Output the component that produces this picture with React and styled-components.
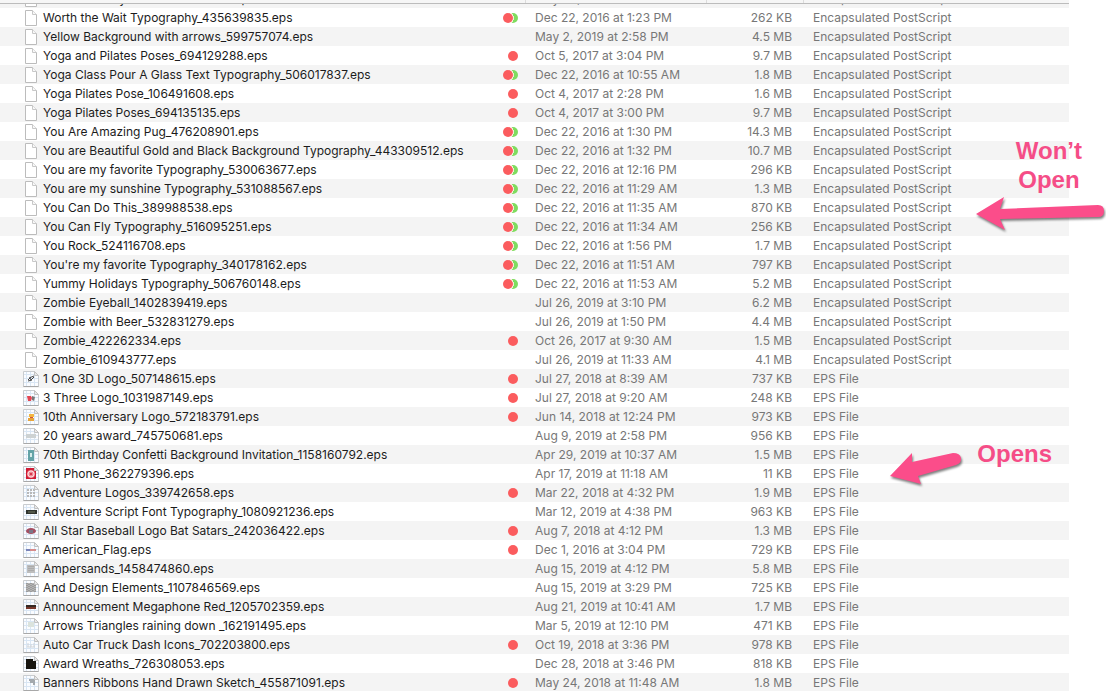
import React from 'react'
import styled, { createGlobalStyle } from 'styled-components'

const GlobalStyle = createGlobalStyle`
  body {
    margin: 0;
    background: #fff;
    overflow: hidden;
    font-family: Inter, "Liberation Sans", sans-serif;
  }
`;

const Page = styled.main`
  position: relative;
  height: 100vh;
  overflow: hidden;
`;

const FileTable = styled.table`
  width: calc(100% - 37px);
  table-layout: fixed;
  border-collapse: collapse;
  font-size: 12px;
  line-height: 19px;
  color: #777;
`;

const NameCol = styled.col``;

const TagCol = styled.col`
  width: 36px;
`;

const DateCol = styled.col`
  width: 181px;
`;

const SizeCol = styled.col`
  width: 97px;
`;

const KindCol = styled.col`
  width: 266px;
`;

const HeadCell = styled.th`
  height: 3px;
  padding: 0;
  background: #f6f6f6;
  border-bottom: 1px solid #bcbcbc;
  border-right: ${props => props.$line ? '1px solid #dcdcdc' : 'none'};
`;

const Row = styled.tr`
  height: 19px;
  background: #fff;

  &:nth-child(odd) {
    background: #f4f4f4;
  }
`;

const CutRow = styled(Row)`
  height: 4px;
`;

const Cell = styled.td`
  padding: 0 ${props => props.$right || 0}px 0 ${props => props.$left || 0}px;
  text-align: ${props => props.$align || 'left'};
  white-space: nowrap;
`;

const CutText = styled.div`
  display: flex;
  align-items: flex-end;
  height: 4px;
  overflow: hidden;
`;

const FileName = styled.div`
  display: flex;
  align-items: center;
  gap: 4px;
  height: 19px;
  color: #1c1c1c;

  & svg {
    flex: none;
  }
`;

const Tags = styled.div`
  display: flex;
  align-items: center;
  justify-content: flex-end;
  height: 19px;
`;

const Dot = styled.span`
  width: 10px;
  height: 10px;
  border-radius: 50%;
  background: #fb5c5e;
`;

const Moon = styled.span`
  width: 10px;
  height: 10px;
  margin-left: -5px;
  border-radius: 50%;
  background: radial-gradient(circle at 0 5px, transparent 5px, #f3ecd4 5px, #f3ecd4 6px, #7fdc5f 6px);
`;

const Note = styled.div`
  position: absolute;
  top: ${props => props.$top}px;
  right: ${props => props.$right}px;
  color: #f54d87;
  font-family: "Liberation Sans", Arial, sans-serif;
  font-size: 24px;
  font-weight: bold;
  line-height: 29px;
  text-align: center;
`;

const Arrow = styled.svg`
  position: absolute;
  top: ${props => props.$top}px;
  right: ${props => props.$right}px;
  overflow: visible;
  filter: drop-shadow(1px 2px 1px rgba(0, 0, 0, 0.5));
`;

const PS = 'Encapsulated PostScript';
const EPS = 'EPS File';

// name, tags, date, size, kind, preview
const files = [
  ['Worth the Wait Typography_435639835.eps', 2, 'Dec 22, 2016 at 1:23 PM', '262 KB', PS],
  ['Yellow Background with arrows_599757074.eps', 0, 'May 2, 2019 at 2:58 PM', '4.5 MB', PS],
  ['Yoga and Pilates Poses_694129288.eps', 1, 'Oct 5, 2017 at 3:04 PM', '9.7 MB', PS],
  ['Yoga Class Pour A Glass Text Typography_506017837.eps', 2, 'Dec 22, 2016 at 10:55 AM', '1.8 MB', PS],
  ['Yoga Pilates Pose_106491608.eps', 1, 'Oct 4, 2017 at 2:28 PM', '1.6 MB', PS],
  ['Yoga Pilates Poses_694135135.eps', 1, 'Oct 4, 2017 at 3:00 PM', '9.7 MB', PS],
  ['You Are Amazing Pug_476208901.eps', 2, 'Dec 22, 2016 at 1:30 PM', '14.3 MB', PS],
  ['You are Beautiful Gold and Black Background Typography_443309512.eps', 2, 'Dec 22, 2016 at 1:32 PM', '10.7 MB', PS],
  ['You are my favorite Typography_530063677.eps', 2, 'Dec 22, 2016 at 12:16 PM', '296 KB', PS],
  ['You are my sunshine Typography_531088567.eps', 2, 'Dec 22, 2016 at 11:29 AM', '1.3 MB', PS],
  ['You Can Do This_389988538.eps', 2, 'Dec 22, 2016 at 11:35 AM', '870 KB', PS],
  ['You Can Fly Typography_516095251.eps', 2, 'Dec 22, 2016 at 11:34 AM', '256 KB', PS],
  ['You Rock_524116708.eps', 2, 'Dec 22, 2016 at 1:56 PM', '1.7 MB', PS],
  ["You're my favorite Typography_340178162.eps", 2, 'Dec 22, 2016 at 11:51 AM', '797 KB', PS],
  ['Yummy Holidays Typography_506760148.eps', 2, 'Dec 22, 2016 at 11:53 AM', '5.2 MB', PS],
  ['Zombie Eyeball_1402839419.eps', 0, 'Jul 26, 2019 at 3:10 PM', '6.2 MB', PS],
  ['Zombie with Beer_532831279.eps', 0, 'Jul 26, 2019 at 1:50 PM', '4.4 MB', PS],
  ['Zombie_422262334.eps', 1, 'Oct 26, 2017 at 9:30 AM', '1.5 MB', PS],
  ['Zombie_610943777.eps', 0, 'Jul 26, 2019 at 11:33 AM', '4.1 MB', PS],
  ['1 One 3D Logo_507148615.eps', 1, 'Jul 27, 2018 at 8:39 AM', '737 KB', EPS, 'scribble'],
  ['3 Three Logo_1031987149.eps', 1, 'Jul 27, 2018 at 9:20 AM', '248 KB', EPS, 'three'],
  ['10th Anniversary Logo_572183791.eps', 1, 'Jun 14, 2018 at 12:24 PM', '973 KB', EPS, 'gold'],
  ['20 years award_745750681.eps', 0, 'Aug 9, 2019 at 2:58 PM', '956 KB', EPS, 'band'],
  ['70th Birthday Confetti Background Invitation_1158160792.eps', 0, 'Apr 29, 2019 at 10:37 AM', '1.5 MB', EPS, 'card'],
  ['911 Phone_362279396.eps', 0, 'Apr 17, 2019 at 11:18 AM', '11 KB', EPS, 'phone'],
  ['Adventure Logos_339742658.eps', 1, 'Mar 22, 2018 at 4:32 PM', '1.9 MB', EPS, 'grid'],
  ['Adventure Script Font Typography_1080921236.eps', 0, 'Mar 12, 2019 at 4:38 PM', '963 KB', EPS, 'dark'],
  ['All Star Baseball Logo Bat Satars_242036422.eps', 1, 'Aug 7, 2018 at 4:12 PM', '1.3 MB', EPS, 'ball'],
  ['American_Flag.eps', 1, 'Dec 1, 2016 at 3:04 PM', '729 KB', EPS, 'flag'],
  ['Ampersands_1458474860.eps', 0, 'Aug 15, 2019 at 4:12 PM', '5.8 MB', EPS, 'block'],
  ['And Design Elements_1107846569.eps', 0, 'Aug 15, 2019 at 3:29 PM', '725 KB', EPS, 'dense'],
  ['Announcement Megaphone Red_1205702359.eps', 0, 'Aug 21, 2019 at 10:41 AM', '1.7 MB', EPS, 'mega'],
  ['Arrows Triangles raining down _162191495.eps', 0, 'Mar 5, 2019 at 12:10 PM', '471 KB', EPS, 'faint'],
  ['Auto Car Truck Dash Icons_702203800.eps', 1, 'Oct 19, 2018 at 3:36 PM', '978 KB', EPS, 'dash'],
  ['Award Wreaths_726308053.eps', 0, 'Dec 28, 2018 at 3:46 PM', '818 KB', EPS, 'black'],
  ['Banners Ribbons Hand Drawn Sketch_455871091.eps', 1, 'May 24, 2018 at 11:48 AM', '1.8 MB', EPS, 'sketch'],
];

const previews = {
  scribble: <path d="M5 9l2-2 1 2 3-3M6 7l5-2M5 10l4-1" stroke="#444" fill="none" />,
  three: <><path d="M4 6h4l1 2-1 3H5z" fill="#e44653" /><path d="M9 6l3 1-1 4-2-1z" fill="#777" /></>,
  gold: <><path d="M6 5h5v3H6z" fill="#f3b63f" /><path d="M5 9h6v3H5z" fill="#e8a43a" /><path d="M7 8h3v1H7z" fill="#d1503b" /></>,
  band: <path d="M3 6h10v4H3z" fill="#cdd2d3" />,
  card: <><path d="M5 3h6v11H5z" fill="#63a3a7" /><path d="M7 6h2v4H7z" fill="#d6ecea" /></>,
  phone: <><path d="M3 2h8l2 2v9H3z" fill="#d01d35" /><circle cx="8" cy="8" r="4" fill="#ef8793" /><circle cx="8" cy="8" r="3" fill="none" stroke="#fbdde0" /><circle cx="8" cy="8" r="1" fill="#d01d35" /></>,
  grid: <path d="M4 5h2M7 5h2M10 5h2M4 8h2M7 8h2M10 8h2M4 11h2M7 11h2M10 11h2" stroke="#b8b8b8" strokeWidth="2" />,
  dark: <><path d="M3 6h11v4H3z" fill="#30342f" /><path d="M5 8h7" stroke="#747b65" /></>,
  ball: <><ellipse cx="8" cy="8" rx="5" ry="3" fill="#a34f62" /><path d="M6 7h4v3H6z" fill="#79788a" /></>,
  flag: <><path d="M3 8h4" stroke="#7983b8" strokeWidth="2" /><path d="M7 8h6" stroke="#d68b8b" strokeWidth="2" /></>,
  block: <><path d="M4 4h8v8H4z" fill="#bdbdbd" /><path d="M6 5v6M8 5v6M10 5v6" stroke="#989898" strokeDasharray="1 1" /></>,
  dense: <><path d="M3 3h8l2 2v7H3z" fill="#b4b4b4" /><path d="M4 3v9M6 4v8M8 3v9M10 4v8M12 5v7" stroke="#838383" strokeDasharray="1 1" /></>,
  mega: <><path d="M3 6h10v4H3z" fill="#352924" /><path d="M3 9h10" stroke="#b64432" /></>,
  faint: <path d="M5 4h6v5H5z" fill="#dbe3dd" />,
  dash: <path d="M4 10h8M5 6v4M8 7v3M11 6v4" stroke="#d0d4d8" fill="none" />,
  black: <path d="M3 3h7v2h3v8H3z" fill="#17150f" />,
  sketch: <path d="M6 5h6M7 7h5M10 9h2" stroke="#a3a9ae" strokeWidth="2" />,
};

const BlankIcon = () => (
  <svg width="16" height="16" viewBox="0 0 16 16">
    <path d="M2.5 .5h7l4 4v11h-11z" fill="#fff" stroke="#bcbcbc" />
    <path d="M9.5 .5v4h4" fill="#f8f8f8" stroke="#c8c8c8" />
  </svg>
);

const PreviewIcon = ({ type }) => (
  <svg width="16" height="16" viewBox="0 0 16 16">
    <path d="M.5 .5h11l4 4v11H.5z" fill="#fafcff" stroke="#c9cccf" />
    <path d="M3.500 1v14M7.500 1v14M11.500 4v11M1 3.500h11M1 7.500h14M1 11.500h14" stroke="#d9e6f4" />
    {previews[type]}
    <path d="M11.500 .5v4h4z" fill="#e9e9e9" stroke="#c2c2c2" />
    <path d="M.5 15.500h15" stroke="#a8a8a8" />
  </svg>
);

const App = () => {
  return (
    <Page>
      <GlobalStyle />
      <FileTable>
        <colgroup>
          <NameCol />
          <TagCol />
          <DateCol />
          <SizeCol />
          <KindCol />
        </colgroup>
        <thead>
          <tr>
            <HeadCell />
            <HeadCell $line />
            <HeadCell $line />
            <HeadCell $line />
            <HeadCell />
          </tr>
        </thead>
        <tbody>
          {/* row scrolled under the header, only its bottom edge shows */}
          <CutRow>
            <Cell $left={23}>
              <CutText>
                <FileName><BlankIcon />Winter Holiday Scene_128830412.eps</FileName>
              </CutText>
            </Cell>
            <Cell />
            <Cell $left={10}><CutText>May 24, 2018 at 3:12 PM</CutText></Cell>
            <Cell />
            <Cell $left={10}><CutText>{PS}</CutText></Cell>
          </CutRow>
          {files.map(([name, tags, date, size, kind, preview]) => (
            <Row key={name}>
              <Cell $left={23}>
                <FileName>
                  {preview ? <PreviewIcon type={preview} /> : <BlankIcon />}
                  {name}
                </FileName>
              </Cell>
              <Cell $right={7}>
                <Tags>
                  {tags > 0 && <Dot />}
                  {tags > 1 && <Moon />}
                </Tags>
              </Cell>
              <Cell $left={10}>{date}</Cell>
              <Cell $right={11} $align="right">{size}</Cell>
              <Cell $left={10}>{kind}</Cell>
            </Row>
          ))}
        </tbody>
      </FileTable>
      <Note $top={136} $right={24}>Won’t<br />Open</Note>
      <Arrow $top={195} $right={1} width="130" height="40" viewBox="0 0 130 40">
        <path d="M1 19L29 2l-4 12 98-4q6 0 6 6t-6 6l-98 2 5 11z" fill="#fb4d8a" />
      </Arrow>
      <Note $top={439} $right={54}>Opens</Note>
      <Arrow $top={451} $right={144} width="73" height="36" viewBox="0 0 73 36">
        <path d="M1 25L23 2v9l41-9q7 0 8 5t-5 7L29 25l3 8z" fill="#fb4d8a" />
      </Arrow>
    </Page>
  )
}

export default App
